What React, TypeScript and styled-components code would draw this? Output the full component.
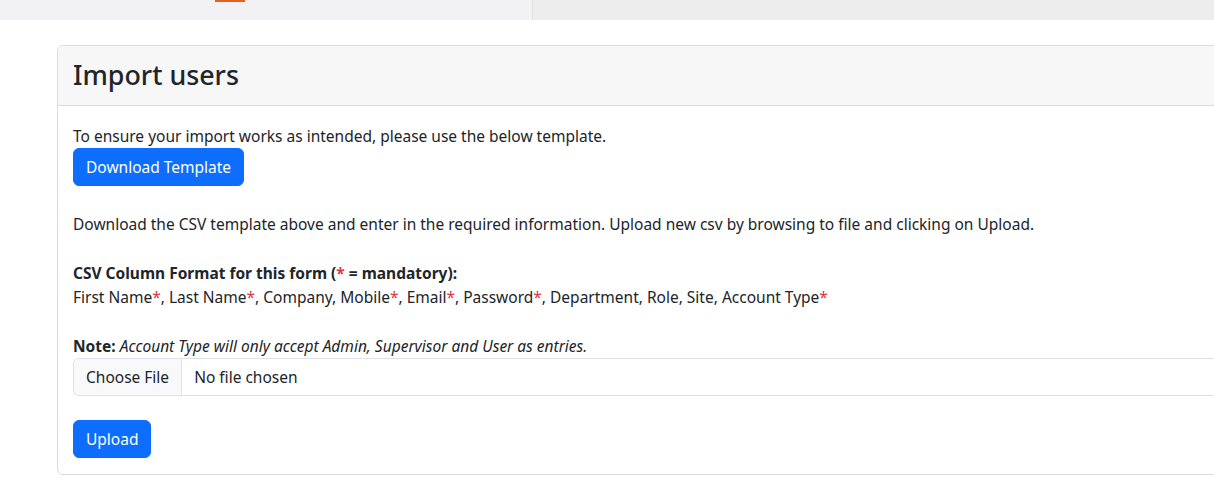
import React from "react";
import styled, { createGlobalStyle } from "styled-components";

const GlobalStyle = createGlobalStyle`
    html, body {
        margin: 0;
        padding: 0;
        background: #ffffff;
        font-family: "Segoe UI", "Noto Sans", "Liberation Sans", sans-serif;
        font-size: 15.5px;
        color: #212529;
        overflow: hidden;
    }
    * { box-sizing: border-box; }
`;

const Page = styled.div`
    width: 1214px;
    height: 502px;
`;

const TopBar = styled.div`
    display: flex;
    height: 20px;
`;

const TopLeft = styled.div`
    position: relative;
    width: 533px;
    background: #f2f2f4;
    border-right: 1px solid #e2e2e4;
`;

const ActiveMark = styled.span`
    position: absolute;
    left: 215px;
    top: 0;
    width: 30px;
    height: 2px;
    background: #e8601c;
`;

const TopRight = styled.div`
    flex: 1;
    background: #ededed;
`;

const Content = styled.div`
    padding: 25px 0 0 57px;
`;

const Card = styled.div`
    width: 1180px;
    border: 1px solid #dcdcdc;
    border-radius: 6px;
    background: #fff;
`;

const CardHeader = styled.div`
    height: 60px;
    padding: 0 15px;
    display: flex;
    align-items: center;
    background: #f7f7f7;
    border-bottom: 1px solid #dcdcdc;
    border-radius: 6px 6px 0 0;
`;

const Title = styled.h3`
    margin: 0;
    font-size: 26.8px;
    font-weight: 500;
    line-height: 1.2;
`;

const CardBody = styled.div`
    padding: 18px 15px 16px;
`;

const Line = styled.div<{ $gap?: number }>`
    line-height: 24px;
    margin-top: ${(p) => p.$gap ?? 0}px;
`;

const Star = styled.span`
    color: #dc3545;
`;

const Button = styled.button`
    display: block;
    height: 38px;
    padding: 0 12px;
    border: 1px solid #0d6efd;
    border-radius: 6px;
    background: #0d6efd;
    color: #fff;
    font: inherit;
    font-size: 15.5px;
    cursor: pointer;
`;

const FileInput = styled.div`
    display: flex;
    height: 38px;
    border: 1px solid #dee2e6;
    border-right: none;
    border-radius: 6px 0 0 6px;
    overflow: hidden;
`;

const FileButton = styled.span`
    display: flex;
    align-items: center;
    padding: 0 12px;
    background: #f8f9fa;
    border-right: 1px solid #dee2e6;
`;

const FileName = styled.span`
    display: flex;
    align-items: center;
    padding: 0 12px;
`;

export default function App() {
    return (
        <Page>
            <GlobalStyle />
            <TopBar>
                <TopLeft><ActiveMark /></TopLeft>
                <TopRight />
            </TopBar>
            <Content>
                <Card>
                    <CardHeader>
                        <Title>Import users</Title>
                    </CardHeader>
                    <CardBody>
                        <Line>To ensure your import works as intended, please use the below template.</Line>
                        <Button>Download Template</Button>
                        <Line $gap={26}>
                            Download the CSV template above and enter in the required information. Upload new csv by browsing to file and clicking on Upload.
                        </Line>
                        <Line $gap={25}>
                            <b>CSV Column Format for this form (<Star>*</Star> = mandatory):</b>
                        </Line>
                        <Line>
                            First Name<Star>*</Star>, Last Name<Star>*</Star>, Company, Mobile<Star>*</Star>, Email<Star>*</Star>, Password<Star>*</Star>, Department, Role, Site, Account Type<Star>*</Star>
                        </Line>
                        <Line $gap={25}>
                            <b>Note:</b> <i>Account Type will only accept Admin, Supervisor and User as entries.</i>
                        </Line>
                        <FileInput>
                            <FileButton>Choose File</FileButton>
                            <FileName>No file chosen</FileName>
                        </FileInput>
                        <Line $gap={24}>
                            <Button>Upload</Button>
                        </Line>
                    </CardBody>
                </Card>
            </Content>
        </Page>
    );
}
